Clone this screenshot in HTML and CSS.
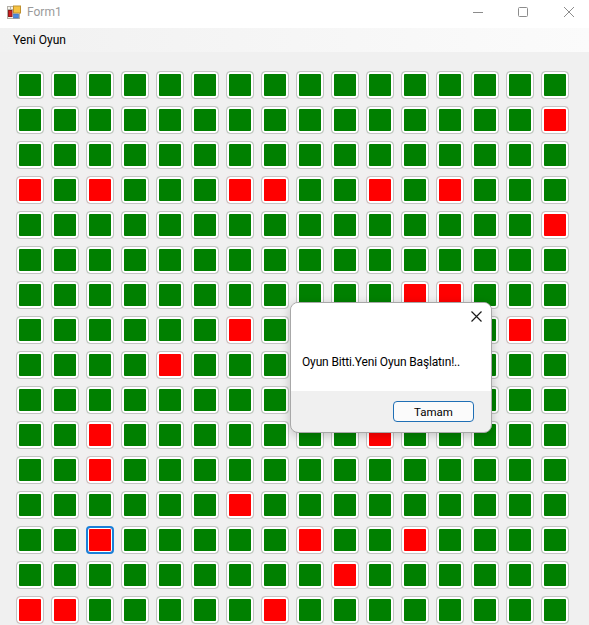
FILE: index.html
```html
<!DOCTYPE html>
<html lang="tr">
<head>
<meta charset="utf-8">
<title>Form1</title>
<link rel="stylesheet" href="styles.css">
</head>
<body>
<div class="window">
  <header class="titlebar">
    <svg class="app-icon" width="14" height="14" viewBox="0 0 14 14" aria-hidden="true">
      <rect x="0.5" y="1.5" width="12" height="12" fill="#f4f1ea" stroke="#b4b0a8" stroke-width="1"/>
      <path d="M0 4.5H6M3.5 2V5" stroke="#b4b0a8" fill="none"/>
      <rect x="1.5" y="5.5" width="3.5" height="6" fill="#d01c1c" stroke="#8c1c1c" stroke-width="1"/>
      <rect x="6.5" y="1" width="7" height="7" fill="#f5c242" stroke="#c0912e" stroke-width="1"/>
      <rect x="6.5" y="9" width="5" height="4" fill="#4a8ae0" stroke="#3a6cb0" stroke-width="0.6"/>
    </svg>
    <span class="title">Form1</span>
    <div class="controls">
      <svg class="ctl" width="10" height="10" viewBox="0 0 10 10" aria-hidden="true"><path d="M0 5.5H10" stroke="#8c8c8c" fill="none"/></svg>
      <svg class="ctl" width="10" height="10" viewBox="0 0 10 10" aria-hidden="true"><rect x="0.5" y="0.5" width="9" height="9" rx="1" stroke="#8c8c8c" fill="none"/></svg>
      <svg class="ctl ctl-close" width="10" height="10" viewBox="0 0 10 10" aria-hidden="true"><path d="M0 0L10 10M10 0L0 10" stroke="#8c8c8c" fill="none"/></svg>
    </div>
  </header>
  <nav class="menubar"><span class="menu-item">Yeni Oyun</span></nav>
  <main class="board">
    <button class="c"></button><button class="c"></button><button class="c"></button><button class="c"></button><button class="c"></button><button class="c"></button><button class="c"></button><button class="c"></button><button class="c"></button><button class="c"></button><button class="c"></button><button class="c"></button><button class="c"></button><button class="c"></button><button class="c"></button><button class="c"></button>
    <button class="c"></button><button class="c"></button><button class="c"></button><button class="c"></button><button class="c"></button><button class="c"></button><button class="c"></button><button class="c"></button><button class="c"></button><button class="c"></button><button class="c"></button><button class="c"></button><button class="c"></button><button class="c"></button><button class="c"></button><button class="c r"></button>
    <button class="c"></button><button class="c"></button><button class="c"></button><button class="c"></button><button class="c"></button><button class="c"></button><button class="c"></button><button class="c"></button><button class="c"></button><button class="c"></button><button class="c"></button><button class="c"></button><button class="c"></button><button class="c"></button><button class="c"></button><button class="c"></button>
    <button class="c r"></button><button class="c"></button><button class="c r"></button><button class="c"></button><button class="c"></button><button class="c"></button><button class="c r"></button><button class="c r"></button><button class="c"></button><button class="c"></button><button class="c r"></button><button class="c"></button><button class="c r"></button><button class="c"></button><button class="c"></button><button class="c"></button>
    <button class="c"></button><button class="c"></button><button class="c"></button><button class="c"></button><button class="c"></button><button class="c"></button><button class="c"></button><button class="c"></button><button class="c"></button><button class="c"></button><button class="c"></button><button class="c"></button><button class="c"></button><button class="c"></button><button class="c"></button><button class="c r"></button>
    <button class="c"></button><button class="c"></button><button class="c"></button><button class="c"></button><button class="c"></button><button class="c"></button><button class="c"></button><button class="c"></button><button class="c"></button><button class="c"></button><button class="c"></button><button class="c"></button><button class="c"></button><button class="c"></button><button class="c"></button><button class="c"></button>
    <button class="c"></button><button class="c"></button><button class="c"></button><button class="c"></button><button class="c"></button><button class="c"></button><button class="c"></button><button class="c"></button><button class="c"></button><button class="c"></button><button class="c"></button><button class="c r"></button><button class="c r"></button><button class="c"></button><button class="c"></button><button class="c"></button>
    <button class="c"></button><button class="c"></button><button class="c"></button><button class="c"></button><button class="c"></button><button class="c"></button><button class="c r"></button><button class="c"></button><button class="c"></button><button class="c"></button><button class="c"></button><button class="c"></button><button class="c"></button><button class="c"></button><button class="c r"></button><button class="c"></button>
    <button class="c"></button><button class="c"></button><button class="c"></button><button class="c"></button><button class="c r"></button><button class="c"></button><button class="c"></button><button class="c"></button><button class="c"></button><button class="c"></button><button class="c"></button><button class="c"></button><button class="c"></button><button class="c"></button><button class="c"></button><button class="c"></button>
    <button class="c"></button><button class="c"></button><button class="c"></button><button class="c"></button><button class="c"></button><button class="c"></button><button class="c"></button><button class="c"></button><button class="c"></button><button class="c"></button><button class="c"></button><button class="c"></button><button class="c"></button><button class="c"></button><button class="c"></button><button class="c"></button>
    <button class="c"></button><button class="c"></button><button class="c r"></button><button class="c"></button><button class="c"></button><button class="c"></button><button class="c"></button><button class="c"></button><button class="c"></button><button class="c"></button><button class="c r"></button><button class="c"></button><button class="c"></button><button class="c"></button><button class="c"></button><button class="c"></button>
    <button class="c"></button><button class="c"></button><button class="c r"></button><button class="c"></button><button class="c"></button><button class="c"></button><button class="c"></button><button class="c"></button><button class="c"></button><button class="c"></button><button class="c"></button><button class="c"></button><button class="c"></button><button class="c"></button><button class="c"></button><button class="c"></button>
    <button class="c"></button><button class="c"></button><button class="c"></button><button class="c"></button><button class="c"></button><button class="c"></button><button class="c r"></button><button class="c"></button><button class="c"></button><button class="c"></button><button class="c"></button><button class="c"></button><button class="c"></button><button class="c"></button><button class="c"></button><button class="c"></button>
    <button class="c"></button><button class="c"></button><button class="c r focus"></button><button class="c"></button><button class="c"></button><button class="c"></button><button class="c"></button><button class="c"></button><button class="c r"></button><button class="c"></button><button class="c"></button><button class="c r"></button><button class="c"></button><button class="c"></button><button class="c"></button><button class="c"></button>
    <button class="c"></button><button class="c"></button><button class="c"></button><button class="c"></button><button class="c"></button><button class="c"></button><button class="c"></button><button class="c"></button><button class="c"></button><button class="c r"></button><button class="c"></button><button class="c"></button><button class="c"></button><button class="c"></button><button class="c"></button><button class="c"></button>
    <button class="c r"></button><button class="c r"></button><button class="c"></button><button class="c"></button><button class="c"></button><button class="c"></button><button class="c"></button><button class="c r"></button><button class="c"></button><button class="c"></button><button class="c"></button><button class="c"></button><button class="c"></button><button class="c"></button><button class="c"></button><button class="c"></button>
  </main>
  <div class="dialog" role="dialog">
    <div class="dialog-body">
      <svg class="dialog-close" width="11" height="11" viewBox="0 0 11 11" aria-hidden="true"><path d="M0.5 0.5L10.5 10.5M10.5 0.5L0.5 10.5" stroke="#1a1a1a" stroke-width="1.2" fill="none"/></svg>
      <p class="dialog-text">Oyun Bitti.Yeni Oyun Başlatın!..</p>
    </div>
    <div class="dialog-foot"><button class="ok">Tamam</button></div>
  </div>
</div>
</body>
</html>
```

FILE: styles.css
```css
* { box-sizing: border-box; }
html, body { margin: 0; padding: 0; height: 100%; overflow: hidden; }
body { font-family: Roboto, "Noto Sans", sans-serif; font-size: 12px; color: #000; }
.window { position: relative; width: 589px; height: 625px; background: #f0f0f0; overflow: hidden; }
.titlebar { display: flex; align-items: center; height: 28px; padding-left: 7px; background: #fff; }
.app-icon { flex: none; margin-top: -4px; }
.title { margin-left: 6px; color: #9a9a9a; font-size: 12px; margin-top: -4px; }
.controls { display: flex; align-items: center; gap: 35px; margin-left: auto; padding-right: 15px; margin-top: -4px; }
.ctl { display: block; }
.ctl-close { margin-left: 1px; }
.menubar { display: flex; align-items: center; height: 24px; padding-left: 13px; background: linear-gradient(to right, #f1f1f1, #fbfbfb); }
.menu-item { font-size: 12px; line-height: 16px; }
.board { display: grid; grid-template-columns: repeat(16, 28px); grid-auto-rows: 28px; gap: 7px; padding: 19px 0 0 16px; }
.c { display: block; width: 28px; height: 28px; margin: 0; padding: 0; background: #008000; background-clip: padding-box; border: 1px solid #c4c4c4; border-radius: 4px; box-shadow: inset 0 0 0 2px #fff; appearance: none; }
.c.r { background-color: #ff0000; }
.c.focus { border: 2px solid #1a80d8; box-shadow: inset 0 0 0 1px #fff; }
.dialog { position: absolute; left: 290px; top: 302px; width: 202px; height: 131px; display: flex; flex-direction: column; background: #f0f0f0; border: 1px solid #a8a8a8; border-radius: 8px; overflow: hidden; box-shadow: 0 2px 10px rgba(0,0,0,.2); }
.dialog-body { position: relative; flex: none; height: 88px; padding: 51px 0 0 11px; background: #fff; }
.dialog-close { position: absolute; right: 9px; top: 8px; }
.dialog-text { margin: 0; font-size: 12px; line-height: 16px; letter-spacing: -0.15px; white-space: nowrap; }
.dialog-foot { flex: 1; display: flex; justify-content: flex-end; align-items: flex-start; padding: 10px 17px 0 0; }
.ok { width: 81px; height: 21px; padding: 0; font: inherit; font-size: 11.5px; line-height: 18px; color: #000; background: #fbfbfb; border: 1px solid #1f6fb5; border-radius: 4px; }
```
